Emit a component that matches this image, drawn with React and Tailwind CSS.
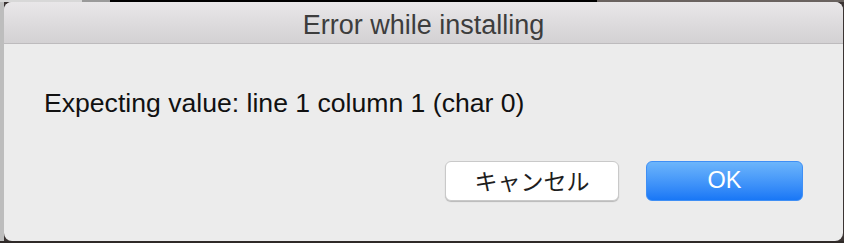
export default function App() {
  return (
    <div className="w-[844px] h-[243px] flex flex-col bg-[#3b3433] overflow-hidden font-['Liberation_Sans','Noto_Sans_CJK_JP',sans-serif]">
      {/* desktop strip behind the sheet */}
      <div className="flex h-[2px] shrink-0">
        <div className="w-[82px] bg-[#d8d8d8]" />
        <div className="w-[28px] bg-[#9a9a9a]" />
        <div className="w-[487px] bg-black" />
        <div className="flex-1 bg-[#6a6360]" />
      </div>
      <div className="flex h-[239px] shrink-0">
        <div className="w-[4px] bg-[#bdbdbd]" />
        <div className="w-[839px] flex flex-col rounded-[8px] overflow-hidden bg-[#ececec]">
          <div className="h-[42px] shrink-0 flex items-center justify-center pt-[6px] bg-gradient-to-b from-[#e9e7e9] to-[#d3d1d3] border-b border-[#bdbbbd]">
            <span className="text-[27px] leading-none text-[#3d3d3d]">Error while installing</span>
          </div>
          <div className="pl-[40px] pt-[46px] text-[26.6px] leading-none text-[#111]">
            Expecting value: line 1 column 1 (char 0)
          </div>
          <div className="flex justify-end gap-[27px] pr-[40px] mt-[44px]">
            <button className="w-[174px] h-[40px] flex items-center justify-center rounded-[6px] bg-white border border-[#c9c9c9] shadow-[0_1px_1px_rgba(0,0,0,0.22)] text-[23px] leading-none text-[#1e1e1e] font-['Noto_Sans_CJK_JP',sans-serif]">
              キャンセル
            </button>
            <button className="w-[157px] h-[40px] flex items-center justify-center rounded-[6px] bg-gradient-to-b from-[#6cb5fb] to-[#1877f6] border border-[#3f8ff5] text-[23.5px] leading-none text-white">
              OK
            </button>
          </div>
        </div>
      </div>
      <div className="h-[2px] bg-[#2f2a28]" />
    </div>
  );
}
